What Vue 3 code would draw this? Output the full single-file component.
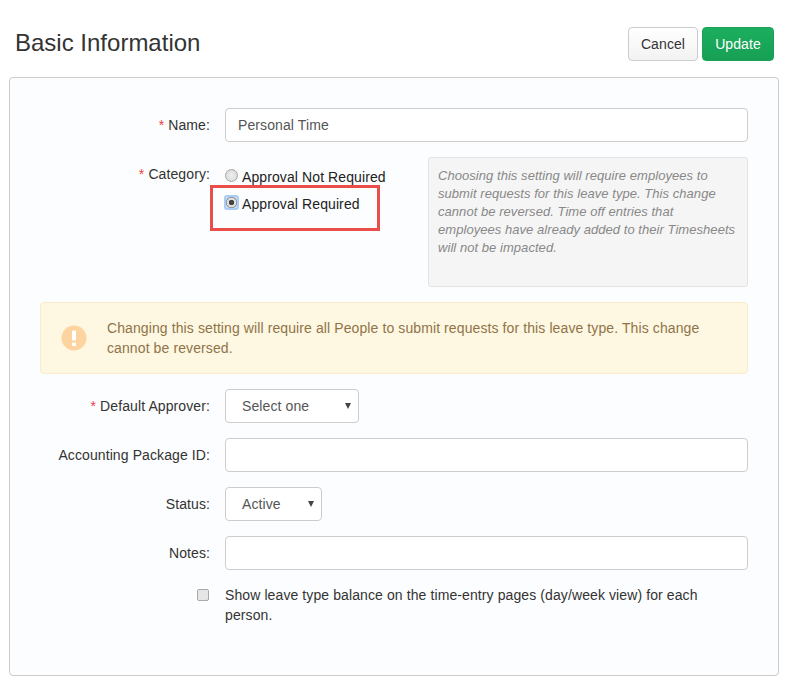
<template>
  <div class="page">
    <div class="header">
      <h1>Basic Information</h1>
      <div class="actions">
        <button class="btn btn-cancel">Cancel</button>
        <button class="btn btn-update">Update</button>
      </div>
    </div>

    <div class="panel">
      <div class="row">
        <label class="label"><span class="req">*</span> Name:</label>
        <input class="field" v-model="name" />
      </div>

      <div class="row category">
        <label class="label label-category"><span class="req">*</span> Category:</label>
        <div class="radios">
          <label v-for="opt in categories" :key="opt" class="radio-line">
            <input type="radio" :value="opt" v-model="category" />
            <span>{{ opt }}</span>
          </label>
          <div class="highlight"></div>
        </div>
        <div class="help">
          Choosing this setting will require employees to submit requests for this leave type. This change cannot be reversed. Time off entries that employees have already added to their Timesheets will not be impacted.
        </div>
      </div>

      <div class="warning">
        <svg class="warning-icon" width="26" height="26" viewBox="0 0 26 26">
          <circle cx="13" cy="13" r="12.5" fill="#fdd49f" />
          <rect x="11" y="5.5" width="4" height="10" rx="1" fill="#fff" />
          <rect x="11" y="17.5" width="4" height="3.5" rx="0.8" fill="#fff" />
        </svg>
        <p>Changing this setting will require all People to submit requests for this leave type. This change cannot be reversed.</p>
      </div>

      <div class="row">
        <label class="label"><span class="req">*</span> Default Approver:</label>
        <div class="select-wrap approver">
          <select v-model="approver">
            <option>Select one</option>
          </select>
        </div>
      </div>

      <div class="row">
        <label class="label">Accounting Package ID:</label>
        <input class="field" />
      </div>

      <div class="row">
        <label class="label">Status:</label>
        <div class="select-wrap status">
          <select v-model="status">
            <option>Active</option>
            <option>Inactive</option>
          </select>
        </div>
      </div>

      <div class="row">
        <label class="label">Notes:</label>
        <input class="field" />
      </div>

      <div class="row check-row">
        <div class="check-cell"><input type="checkbox" v-model="showBalance" /></div>
        <label class="check-text">Show leave type balance on the time-entry pages (day/week view) for each person.</label>
      </div>
    </div>
  </div>
</template>

<script setup>
import { ref } from 'vue'

const name = ref('Personal Time')
const categories = ['Approval Not Required', 'Approval Required']
const category = ref('Approval Required')
const approver = ref('Select one')
const status = ref('Active')
const showBalance = ref(false)
</script>

<style scoped>
.page {
  font-family: "Liberation Sans", Arial, sans-serif;
  font-size: 14px;
  line-height: 20px;
  letter-spacing: 0.1px;
  color: #333;
  background: #fff;
  width: 795px;
  height: 687px;
  overflow: hidden;
  box-sizing: border-box;
  padding: 27px 16px 0 9px;
}

.header {
  display: flex;
  justify-content: space-between;
  align-items: center;
  height: 34px;
  margin-bottom: 16px;
  padding: 0 5px 0 6px;
}

h1 {
  margin: 0 0 2px;
  font-size: 24px;
  font-weight: 400;
  line-height: 32px;
  letter-spacing: 0;
  color: #333;
}

.actions {
  display: flex;
  gap: 4px;
}

.btn {
  height: 34px;
  padding: 0;
  font: inherit;
  letter-spacing: inherit;
  border-radius: 4px;
  box-sizing: border-box;
}

.btn-cancel {
  width: 70px;
  color: #333;
  border: 1px solid #ccc;
  background: linear-gradient(#fff, #f2f2f2);
}

.btn-update {
  width: 72px;
  color: #fff;
  border: 1px solid #1aa158;
  background: linear-gradient(#1cae5f, #17a055);
}

.panel {
  height: 599px;
  box-sizing: border-box;
  border: 1px solid #ccc;
  border-radius: 4px;
  background: #fcfdfe;
  padding: 30px 30px 0;
}

.row {
  display: flex;
  align-items: center;
  margin-bottom: 15px;
}

.label {
  width: 170px;
  flex: none;
  margin-right: 15px;
  text-align: right;
  color: #333;
}

.req {
  color: #e8403c;
}

.field {
  flex: 1;
  min-width: 0;
  height: 34px;
  box-sizing: border-box;
  padding: 6px 12px;
  font: inherit;
  letter-spacing: inherit;
  color: #555;
  background: #fff;
  border: 1px solid #ccc;
  border-radius: 4px;
  outline: none;
}

.category {
  align-items: flex-start;
}

.label-category {
  margin-top: 7px;
}

.radios {
  position: relative;
  width: 203px;
  flex: none;
  padding-top: 10px;
}

.radio-line {
  display: flex;
  align-items: center;
  height: 20px;
  margin-bottom: 7px;
  color: #222;
}

.radio-line input {
  appearance: none;
  width: 13px;
  height: 13px;
  margin: 0 4px 3px 0;
  flex: none;
  border: 1px solid #a6a6a6;
  border-radius: 50%;
  background: radial-gradient(circle, #f0f0f0, #d4d4d4);
}

/* focused radio: square blue ring round the round control */
.radio-line input:checked {
  width: 15px;
  height: 15px;
  margin: 0 3px 3px -1px;
  box-sizing: border-box;
  border: 2px solid #a9cdf5;
  border-radius: 3px;
  background: radial-gradient(circle, #444 0 2.5px, #dedede 3px 4.5px, #999 5px 5.5px, #cfe2f8 6px);
}

/* red annotation box drawn on top of the screenshot */
.highlight {
  position: absolute;
  left: -15px;
  top: 28px;
  width: 170px;
  height: 46px;
  box-sizing: border-box;
  border: 3px solid #e94e4a;
}

.help {
  flex: 1;
  height: 130px;
  box-sizing: border-box;
  padding: 9px 10px 9px 9px;
  font-size: 13px;
  line-height: 18px;
  letter-spacing: 0.05px;
  font-style: italic;
  color: #888;
  background: #f5f5f5;
  border: 1px solid #e3e3e3;
  border-radius: 3px;
}

.warning {
  display: flex;
  align-items: center;
  height: 72px;
  box-sizing: border-box;
  margin-bottom: 15px;
  padding: 0 20px;
  background: #fef7e2;
  border: 1px solid #faebcc;
  border-radius: 4px;
  color: #8f7448;
}

.warning-icon {
  flex: none;
  margin-right: 20px;
}

.warning p {
  margin: 0;
}

.select-wrap {
  position: relative;
  height: 34px;
}

.select-wrap::after {
  content: "";
  position: absolute;
  right: 8px;
  top: 14px;
  border-left: 3px solid transparent;
  border-right: 3px solid transparent;
  border-top: 6px solid #444;
  pointer-events: none;
}

.approver {
  width: 134px;
}

.status {
  width: 97px;
}

select {
  appearance: none;
  width: 100%;
  height: 34px;
  box-sizing: border-box;
  padding: 0 12px 0 16px;
  font: inherit;
  letter-spacing: inherit;
  color: #555;
  background: #fff;
  border: 1px solid #ccc;
  border-radius: 4px;
  outline: none;
}

.check-row {
  align-items: flex-start;
}

.check-cell {
  width: 185px;
  flex: none;
  display: flex;
  justify-content: flex-end;
  padding-top: 4px;
}

.check-cell input {
  appearance: none;
  width: 12px;
  height: 12px;
  margin: 0 16px 0 0;
  border: 1px solid #a9a9a9;
  border-radius: 2px;
  background: #e6e6e6;
}

.check-text {
  flex: 1;
  padding-right: 40px;
  color: #333;
}
</style>

<style>
html, body {
  background: #fff;
}
</style>
